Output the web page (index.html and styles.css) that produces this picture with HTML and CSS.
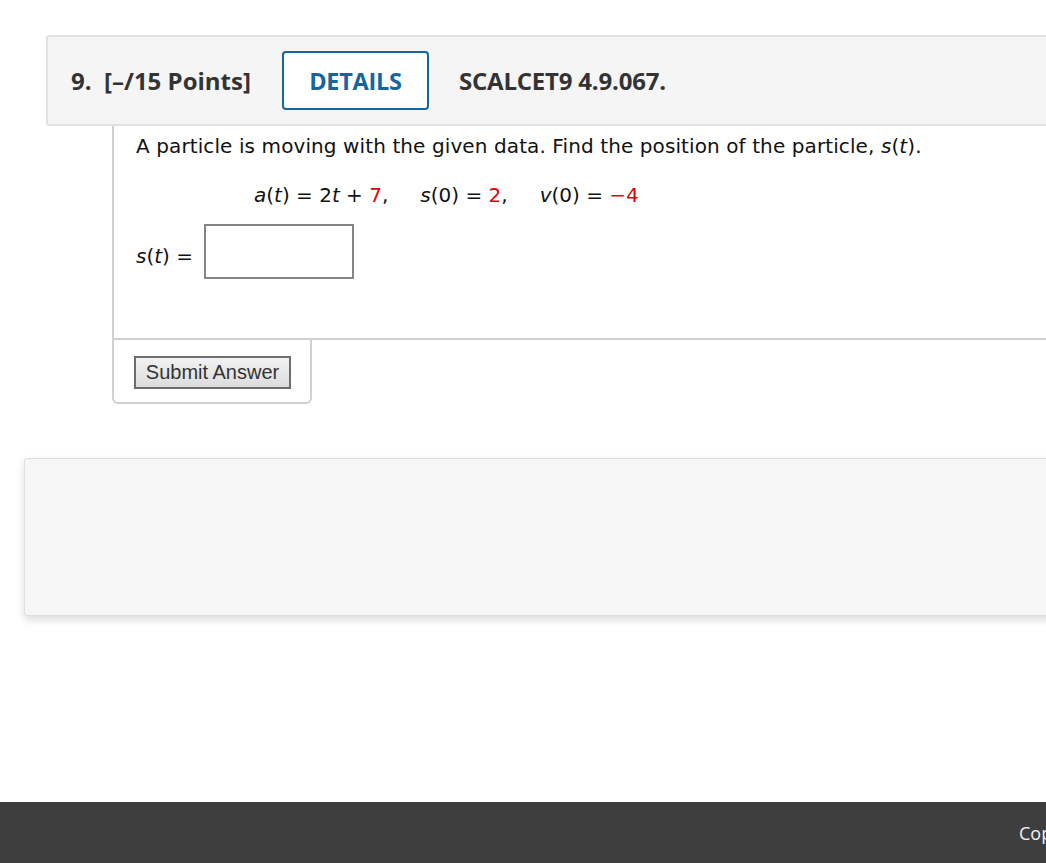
FILE: index.html
```html
<!DOCTYPE html>
<html lang="en">
<head>
    <meta charset="UTF-8">
    <title>SCALCET9 4.9.067</title>
    <link rel="stylesheet" href="styles.css">
</head>
<body>
    <div class="page">
        <div class="question-header">
            <span class="question-number">9.&nbsp; [–/15 Points]</span>
            <button class="details-btn">DETAILS</button>
            <span class="question-ref">SCALCET9 4.9.067.</span>
        </div>

        <div class="question-body">
            <p class="prompt">A particle is moving with the given data. Find the position of the particle, <i>s</i>(<i>t</i>).</p>
            <p class="given">
                <i>a</i>(<i>t</i>) = 2<i>t</i> + <span class="val">7</span>,<span class="sp"></span><i>s</i>(0) = <span class="val">2</span>,<span class="sp"></span><i>v</i>(0) = <span class="val">−4</span>
            </p>
            <div class="answer-row">
                <label for="ans"><i>s</i>(<i>t</i>) =</label>
                <input id="ans" class="answer-input" type="text">
            </div>
        </div>

        <div class="submit-tab">
            <button class="submit-btn">Submit Answer</button>
        </div>

        <div class="next-card"></div>
    </div>

    <footer class="site-footer">
        <span>Copyright © 1998 - 2024 Cengage Learning, Inc. All Rights Reserved</span>
    </footer>
</body>
</html>
```

FILE: styles.css
```css
* {
    box-sizing: border-box;
}

html, body {
    margin: 0;
    padding: 0;
    height: 863px;
    overflow: hidden;
    background: #fff;
}

body {
    display: flex;
    flex-direction: column;
    font-family: "Open Sans", sans-serif;
    color: #333;
}

.page {
    flex: 1;
    padding-top: 35px;
}

/* шапка питання */
.question-header {
    display: flex;
    align-items: center;
    height: 91px;
    margin-left: 46px;
    width: 1100px;
    padding-left: 23px;
    background: #f5f5f5;
    border: 2px solid #e2e2e2;
    border-radius: 3px;
}

.question-number,
.question-ref {
    font-size: 24px;
    font-weight: 700;
    color: #333;
}

.question-ref {
    margin-left: 30px;
    letter-spacing: -0.2px;
}

.details-btn {
    margin-left: 31px;
    width: 147px;
    height: 59px;
    background: #fff;
    border: 2px solid #16659b;
    border-radius: 4px;
    color: #16659b;
    font-family: "Open Sans", sans-serif;
    font-size: 23.5px;
    font-weight: 700;
    letter-spacing: -0.3px;
    cursor: pointer;
}

/* тіло питання */
.question-body {
    margin-left: 112px;
    width: 1100px;
    padding: 8px 0 59px 22px;
    border-left: 2px solid #d0d0d0;
    border-bottom: 2px solid #d0d0d0;
    font-family: "DejaVu Sans", Verdana, sans-serif;
    font-size: 20px;
    color: #111;
}

.prompt {
    margin: 0;
    line-height: 24px;
    letter-spacing: 0.1px;
}

.given {
    margin: 25px 0 0 118px;
    line-height: 24px;
}

.val {
    color: #e0000b;
}

.sp {
    display: inline-block;
    width: 32px;
}

.answer-row {
    display: flex;
    align-items: center;
    margin-top: 17px;
}

.answer-row label {
    width: 68px;
    padding-top: 8px;
}

.answer-input {
    width: 150px;
    height: 55px;
    border: 2px solid #848484;
    border-radius: 0;
    font-size: 16px;
    padding: 4px;
}

/* кнопка відповіді */
.submit-tab {
    margin-left: 112px;
    width: 200px;
    padding: 16px 0 13px 20px;
    border: 2px solid #d0d0d0;
    border-top: none;
    border-radius: 0 0 6px 6px;
}

.submit-btn {
    display: block;
    width: 157px;
    height: 33px;
    padding: 0;
    background: linear-gradient(#f2f2f2, #dcdcdc);
    border: 2px solid #6d6d6d;
    border-radius: 0;
    font-family: "Liberation Sans", Arial, sans-serif;
    font-size: 20px;
    color: #333;
    cursor: pointer;
}

.next-card {
    margin: 54px 0 0 24px;
    width: 1100px;
    height: 158px;
    background: #f6f6f6;
    border: 1px solid #dedede;
    border-radius: 3px;
    box-shadow: 0 4px 8px rgba(0, 0, 0, 0.14);
}

.site-footer {
    height: 61px;
    background: #3e3e3e;
    display: flex;
    align-items: center;
    padding-left: 1019px;
    white-space: nowrap;
    color: #f2f2f2;
    font-size: 18px;
}
```
